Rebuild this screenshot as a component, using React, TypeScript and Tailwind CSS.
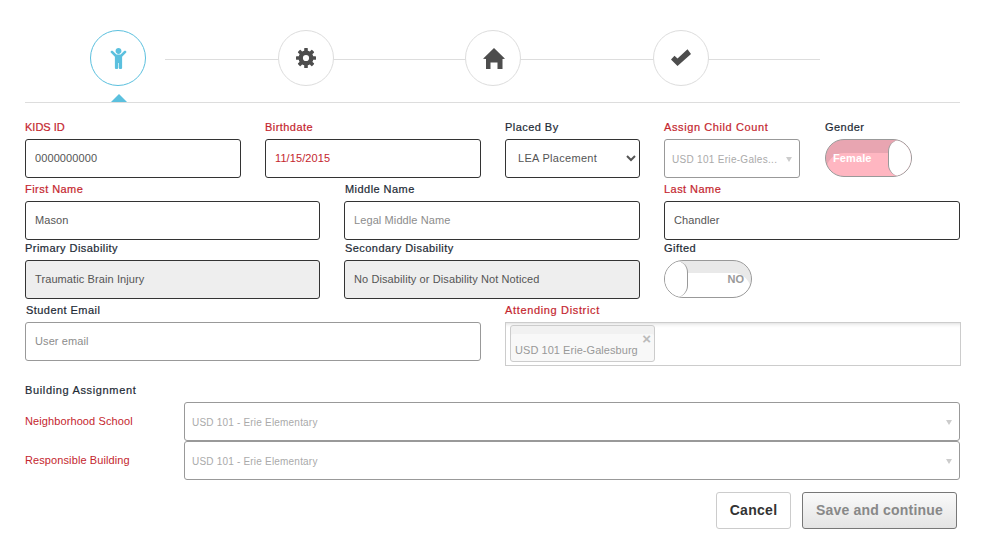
import {FaChild} from 'react-icons/fa'

const labelBase = "block h-[12px] text-[11px] leading-[12px] [-webkit-text-stroke:0.2px_currentColor] mb-[6px]";
const labelCls = labelBase + " tracking-[0.45px]";
const redLabel = labelCls + " text-[#c4262e]";
const darkLabel = labelCls + " text-[#222a35]";
const inputCls = "block w-full h-[39px] rounded-[3px] border border-[#333] bg-white px-[9px] pb-[2px] text-[11px] tracking-[0.1px] text-[#555] placeholder:text-[#8c8c8c] outline-none";
const readonlyCls = "flex items-center w-full h-[39px] rounded-[3px] border border-[#333] bg-[#eee] px-[9px] text-[11px] tracking-[0.1px] text-[#555]";

function Caret() {
  return <span className="ml-auto w-0 h-0 border-x-[3px] border-x-transparent border-t-[5px] border-t-[#ccc]"></span>
}

function GearIcon() {
  return (
    <svg width="20" height="20" viewBox="0 0 20 20" fill="#4d4d4d">
      <circle cx="10" cy="10" r="5.3" fill="none" stroke="#4d4d4d" strokeWidth="4.4" />
      {[0, 45, 90, 135, 180, 225, 270, 315].map((a) => (
        <rect key={a} x="8.2" y="0" width="3.6" height="4" rx="0.6" transform={`rotate(${a} 10 10)`} />
      ))}
    </svg>
  )
}

function HomeIcon() {
  return (
    <svg width="22" height="21" viewBox="0 0 22 21" fill="#4d4d4d" className="ml-[2px]">
      <polygon points="11,0 22,10.8 19.5,11 19.5,21 14.5,21 14.5,14.4 7.5,14.4 7.5,21 3,21 3,11 0,10.8" />
    </svg>
  )
}

function CheckIcon() {
  return (
    <svg width="20" height="18" viewBox="0 0 20 18" fill="#4d4d4d">
      <polygon points="0,10.5 6.5,17 20,5 16.5,0.3 6.5,9.5 3.5,6.8" />
    </svg>
  )
}

function BuildingRow({label}: {label: string}) {
  return (
    <div className="flex items-center">
      <span className="w-[159px] text-[11px] tracking-[0.1px] text-[#c4262e]">{label}</span>
      <div className="flex-1 flex items-center h-[39px] rounded-[3px] border border-[#999] px-[7px] pt-[1px] text-[10px] tracking-[0.2px] text-[#aaa]">
        USD 101 - Erie Elementary
        <Caret />
      </div>
    </div>
  )
}

export default function App() {
  return (
    <div className="w-[983px] h-[550px] bg-white overflow-hidden pl-[25px] pr-[23px] pt-[30px] font-['Liberation_Sans',Arial,sans-serif]">

      {/* stepper */}
      <div className="relative flex h-[72px] pl-[65px] border-b border-[#ddd] box-content">
        <div className="absolute left-[140px] top-[29px] w-[655px] h-px bg-[#ddd]"></div>
        <div className="relative w-[188px]">
          <div className="w-[56px] h-[56px] rounded-full border border-[#5bc0de] bg-white flex items-center justify-center text-[#5bc0de]">
            <FaChild size={21} />
          </div>
          <div className="absolute left-[21px] top-[64px] w-0 h-0 border-x-[8px] border-x-transparent border-b-[8px] border-b-[#5bc0de]"></div>
        </div>
        <div className="relative w-[187px]">
          <div className="w-[56px] h-[56px] rounded-full border border-[#ddd] bg-white flex items-center justify-center">
            <GearIcon />
          </div>
        </div>
        <div className="relative w-[188px]">
          <div className="w-[56px] h-[56px] rounded-full border border-[#ddd] bg-white flex items-center justify-center">
            <HomeIcon />
          </div>
        </div>
        <div className="relative w-[56px]">
          <div className="w-[56px] h-[56px] rounded-full border border-[#ddd] bg-white flex items-center justify-center">
            <CheckIcon />
          </div>
        </div>
      </div>

      {/* row 1 */}
      <div className="flex gap-6 mt-[18px]">
        <div className="w-[216px]">
          <label className={labelBase + " tracking-normal text-[#c4262e]"}>KIDS ID</label>
          <input className={inputCls} defaultValue="0000000000" />
        </div>
        <div className="w-[216px]">
          <label className={redLabel}>Birthdate</label>
          <input className={inputCls + " !text-[#c4262e]"} defaultValue="11/15/2015" />
        </div>
        <div className="w-[135px]">
          <label className={darkLabel}>Placed By</label>
          <select className={inputCls + " !px-[8px] tracking-[0.3px]"} defaultValue="LEA Placement">
            <option>LEA Placement</option>
          </select>
        </div>
        <div className="w-[136px]">
          <label className={labelBase + " tracking-[0.6px] text-[#c4262e]"}>Assign Child Count</label>
          <div className="flex items-center h-[39px] rounded-[3px] border border-[#999] px-[7px] pt-[1px] text-[10px] tracking-[0.3px] text-[#aaa]">
            USD 101 Erie-Gales...
            <Caret />
          </div>
        </div>
        <div className="w-[87px] ml-px">
          <label className={darkLabel}>Gender</label>
          <div className="relative h-[38px] rounded-full border border-[#999] bg-[#ffb6c1] shadow-[inset_0_13px_0_#e8a5b1] pl-[7px] text-[11px] leading-[36px] font-bold tracking-[0.1px] text-white overflow-hidden">
            Female
            <div className="absolute right-0 top-0 w-[23px] h-full rounded-full border-l border-[#999] bg-white"></div>
          </div>
        </div>
      </div>

      {/* row 2 */}
      <div className="grid grid-cols-[295px_296px_296px] gap-6 mt-[5px]">
        <div>
          <label className={redLabel}>First Name</label>
          <input className={inputCls} defaultValue="Mason" />
        </div>
        <div>
          <label className={darkLabel + " ml-px"}>Middle Name</label>
          <input className={inputCls} placeholder="Legal Middle Name" />
        </div>
        <div>
          <label className={redLabel}>Last Name</label>
          <input className={inputCls} defaultValue="Chandler" />
        </div>
      </div>

      {/* row 3 */}
      <div className="grid grid-cols-[295px_296px_296px] gap-6 mt-[2px]">
        <div>
          <label className={darkLabel}>Primary Disability</label>
          <div className={readonlyCls}>Traumatic Brain Injury</div>
        </div>
        <div>
          <label className={darkLabel + " ml-px"}>Secondary Disability</label>
          <div className={readonlyCls}>No Disability or Disability Not Noticed</div>
        </div>
        <div>
          <label className={darkLabel}>Gifted</label>
          <div className="relative w-[88px] h-[38px] rounded-full border border-[#999] bg-white shadow-[inset_0_12px_0_#e9e9e9] pr-[7px] text-right text-[11px] leading-[36px] font-bold text-[#999] overflow-hidden">
            NO
            <div className="absolute left-0 top-0 w-[23px] h-full rounded-full border-r border-[#999] bg-white"></div>
          </div>
        </div>
      </div>

      {/* row 4 */}
      <div className="flex gap-6 mt-[5px]">
        <div className="w-[456px] shrink-0">
          <label className={darkLabel + " ml-px"}>Student Email</label>
          <input className={inputCls + " !border-[#999]"} placeholder="User email" />
        </div>
        <div className="w-[456px] shrink-0">
          <label className={labelBase + " tracking-[0.65px] text-[#c4262e]"}>Attending District</label>
          <div className="h-[44px] border border-[#ccc] shadow-[inset_0_5px_5px_-5px_#ccc] px-[4px] pt-[2px]">
            <div className="relative w-[145px] h-[37px] rounded-[3px] border border-[#ccc] bg-[#f8f8f8] shadow-[inset_0_8px_0_#f1f1f1] px-[4px] pt-[17px] text-[11px] leading-[14px] tracking-[0.05px] text-[#999]">
              USD 101 Erie-Galesburg
              <span className="absolute right-[3px] top-[5px] text-[15px] leading-[16px] font-bold text-[#bbb]">×</span>
            </div>
          </div>
        </div>
      </div>

      {/* building */}
      <div className="mt-[18px]">
        <label className={labelBase + " tracking-[0.65px] text-[#222a35]"}>Building Assignment</label>
        <BuildingRow label="Neighborhood School" />
        <BuildingRow label="Responsible Building" />
      </div>

      {/* buttons */}
      <div className="flex justify-end gap-[11px] mt-[12px] pr-[3px]">
        <button className="w-[75px] h-[37px] rounded-[3px] border border-[#ccc] bg-white text-[14px] font-bold tracking-[0.3px] text-[#333]">Cancel</button>
        <button className="w-[155px] h-[37px] rounded-[3px] border border-[#777] bg-gradient-to-b from-[#fafafa] to-[#e4e4e4] text-[14px] font-bold tracking-[0.2px] text-[#888]">Save and continue</button>
      </div>
    </div>
  );
}
